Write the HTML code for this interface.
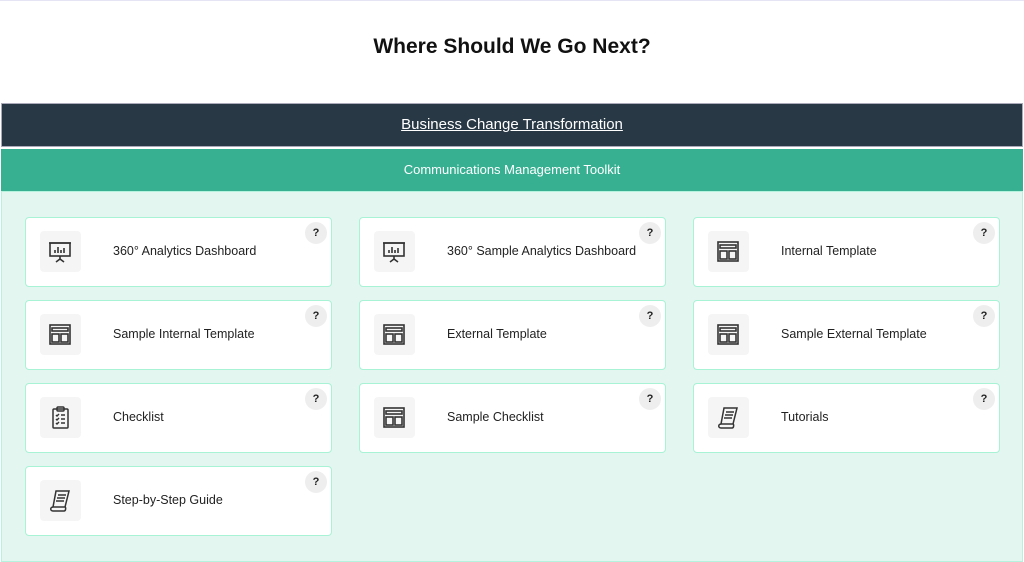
<!DOCTYPE html>
<html><head><style>
*{margin:0;padding:0;box-sizing:border-box}
body{width:1024px;height:562px;overflow:hidden;background:#fff;font-family:"Liberation Sans",sans-serif;position:relative;color:#222}
.top{position:absolute;left:0;top:0;width:1024px;height:1px;background:#e4e4f4}
h1{position:absolute;top:35px;left:0;width:1024px;text-align:center;font-size:21px;font-weight:bold;color:#111}
.dark{position:absolute;left:1px;top:103px;width:1022px;height:44px;background:#283845;border:1px solid #aab;color:#fff;text-align:center;font-size:15px;line-height:42px}
.dark span{text-decoration:underline}
.green{position:absolute;left:1px;top:149px;width:1022px;height:43px;background:#37b092;color:#fff;text-align:center;font-size:13px;line-height:41px}
.mint{position:absolute;left:1px;top:191px;width:1022px;height:371px;background:#e3f7f0;border:1px solid #b5f3df}
.card{position:absolute;width:307px;height:70px;background:#fff;border:1px solid #a8f2d6;border-radius:4px}
.ic{position:absolute;left:14px;top:13px;width:41px;height:41px;background:#f5f5f5;border-radius:4px}
.ic svg{position:absolute;left:8px;top:8px}
.t{position:absolute;left:87px;top:26px;font-size:12.5px;color:#222}
.q{position:absolute;right:4px;top:4px;width:22px;height:22px;border-radius:50%;background:#eee;font-size:11px;font-weight:bold;text-align:center;line-height:22px;color:#222}
</style></head><body>
<div class="top"></div>
<h1>Where Should We Go Next?</h1>
<div class="dark"><span>Business Change Transformation</span></div>
<div class="green">Communications Management Toolkit</div>
<div class="mint"></div>
<svg width="0" height="0" style="position:absolute">
<defs>
<g id="pres" fill="none" stroke="#333" stroke-width="1.6"><rect x="2" y="4" width="20" height="13"/><line x1="1" y1="4" x2="23" y2="4"/><line x1="7" y1="14" x2="7" y2="11"/><line x1="10" y1="14" x2="10" y2="8"/><line x1="13" y1="14" x2="13" y2="11"/><line x1="16" y1="14" x2="16" y2="9"/><path d="M12 17v3M12 20l-4 3M12 20l4 3"/></g>
<g id="tpl" fill="none" stroke="#333" stroke-width="1.6"><rect x="2" y="3" width="20" height="19"/><rect x="4" y="6" width="16" height="3"/><rect x="4" y="12" width="7" height="8"/><rect x="13" y="12" width="7" height="8"/></g>
<g id="clip" fill="none" stroke="#333" stroke-width="1.5"><rect x="5" y="4" width="15" height="19" rx="1"/><rect x="9" y="2" width="7" height="4" rx="1"/><path d="M8 10l1 1 2-2M8 14l1 1 2-2M8 18l1 1 2-2M13 10h4M13 14h4M13 18h4"/></g>
<g id="scroll" fill="none" stroke="#333" stroke-width="1.5"><path d="M8 3h13l-4 16H5z"/><path d="M10 7h8M9 10h8M8 13h8"/><path d="M5 19c-3 0-3 4 0 4h11c2 0 2-4 1-4"/></g>
</defs></svg>
<div class="card" style="left:25px;top:217px"><div class="ic"><svg width="25" height="25"><use href="#pres"/></svg></div><div class="t">360° Analytics Dashboard</div><div class="q">?</div></div>
<div class="card" style="left:359px;top:217px"><div class="ic"><svg width="25" height="25"><use href="#pres"/></svg></div><div class="t">360° Sample Analytics Dashboard</div><div class="q">?</div></div>
<div class="card" style="left:693px;top:217px"><div class="ic"><svg width="25" height="25"><use href="#tpl"/></svg></div><div class="t">Internal Template</div><div class="q">?</div></div>
<div class="card" style="left:25px;top:300px"><div class="ic"><svg width="25" height="25"><use href="#tpl"/></svg></div><div class="t">Sample Internal Template</div><div class="q">?</div></div>
<div class="card" style="left:359px;top:300px"><div class="ic"><svg width="25" height="25"><use href="#tpl"/></svg></div><div class="t">External Template</div><div class="q">?</div></div>
<div class="card" style="left:693px;top:300px"><div class="ic"><svg width="25" height="25"><use href="#tpl"/></svg></div><div class="t">Sample External Template</div><div class="q">?</div></div>
<div class="card" style="left:25px;top:383px"><div class="ic"><svg width="25" height="25"><use href="#clip"/></svg></div><div class="t">Checklist</div><div class="q">?</div></div>
<div class="card" style="left:359px;top:383px"><div class="ic"><svg width="25" height="25"><use href="#tpl"/></svg></div><div class="t">Sample Checklist</div><div class="q">?</div></div>
<div class="card" style="left:693px;top:383px"><div class="ic"><svg width="25" height="25"><use href="#scroll"/></svg></div><div class="t">Tutorials</div><div class="q">?</div></div>
<div class="card" style="left:25px;top:466px"><div class="ic"><svg width="25" height="25"><use href="#scroll"/></svg></div><div class="t">Step-by-Step Guide</div><div class="q">?</div></div>
</body></html>
